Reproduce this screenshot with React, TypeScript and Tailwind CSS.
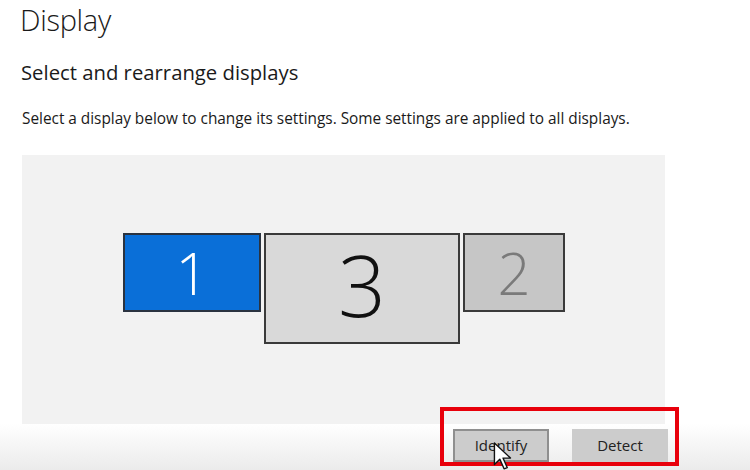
import React from "react";

const font = { fontFamily: '"Open Sans", "Noto Sans", sans-serif' };

// Cursor arrow drawn over the Identify button
const Cursor: React.FC = () => (
  <svg className="absolute left-[493px] top-[442px]" width="20" height="30" viewBox="0 0 18 28">
    <path d="M1 1 L1 21 L6 16 L10 25 L13 24 L9 15 L16 15 Z" fill="#fff" stroke="#111" strokeWidth="1.3" strokeLinejoin="round" />
  </svg>
);

const App: React.FC = () => {
  return (
    <div className="relative w-[750px] h-[470px] overflow-hidden bg-white text-[#1a1a1a]" style={font}>
      <div className="pl-[20px] pt-[1px]">
        <h1 className="text-[29px] font-light leading-[38px] tracking-[-0.3px]">Display</h1>
        <h2 className="mt-[20px] pl-[1px] text-[20.3px] leading-[26px]">Select and rearrange displays</h2>
        <p className="mt-[24px] pl-[2px] text-[15.4px] leading-[20px] tracking-[-0.02px]">
          Select a display below to change its settings. Some settings are applied to all displays.
        </p>
      </div>

      {/* arrangement panel */}
      <div className="ml-[22px] mt-[26px] w-[643px] h-[269px] bg-[#f2f2f2] flex items-center justify-center">
        <div className="flex items-start gap-[3px] ml-[1px] mb-[2px]">
          <div className="w-[138px] h-[79px] bg-[#0a6fd8] border-2 border-[#2a3340] flex items-center justify-center">
            <span className="text-[58px] font-light text-white leading-none">1</span>
          </div>
          <div className="w-[196px] h-[111px] bg-[#d9d9d9] border-2 border-[#3a3a3a] flex items-center justify-center">
            <span className="text-[84px] font-light text-[#111] leading-none pb-[8px]">3</span>
          </div>
          <div className="w-[102px] h-[79px] bg-[#c6c6c6] border-2 border-[#3a3a3a] flex items-center justify-center">
            <span className="text-[58px] font-light text-[#7a7a7a] leading-none">2</span>
          </div>
        </div>
      </div>

      {/* bottom band with buttons */}
      <div className="h-[46px] bg-gradient-to-b from-white to-[#ebebeb] pt-[5px] pl-[453px] flex gap-[23px]">
        <button className="w-[96px] h-[33px] bg-[#cccccc] border-2 border-[#8f8f8f] text-[15px] text-[#222]">
          Identify
        </button>
        <button className="w-[96px] h-[33px] bg-[#cccccc] text-[15px] text-[#222]">Detect</button>
      </div>

      {/* red highlight annotation */}
      <div className="absolute left-[440px] top-[407px] w-[239px] h-[59px] border-[4px] border-[#e8000b]" />

      <Cursor />
    </div>
  );
};

export default App;
